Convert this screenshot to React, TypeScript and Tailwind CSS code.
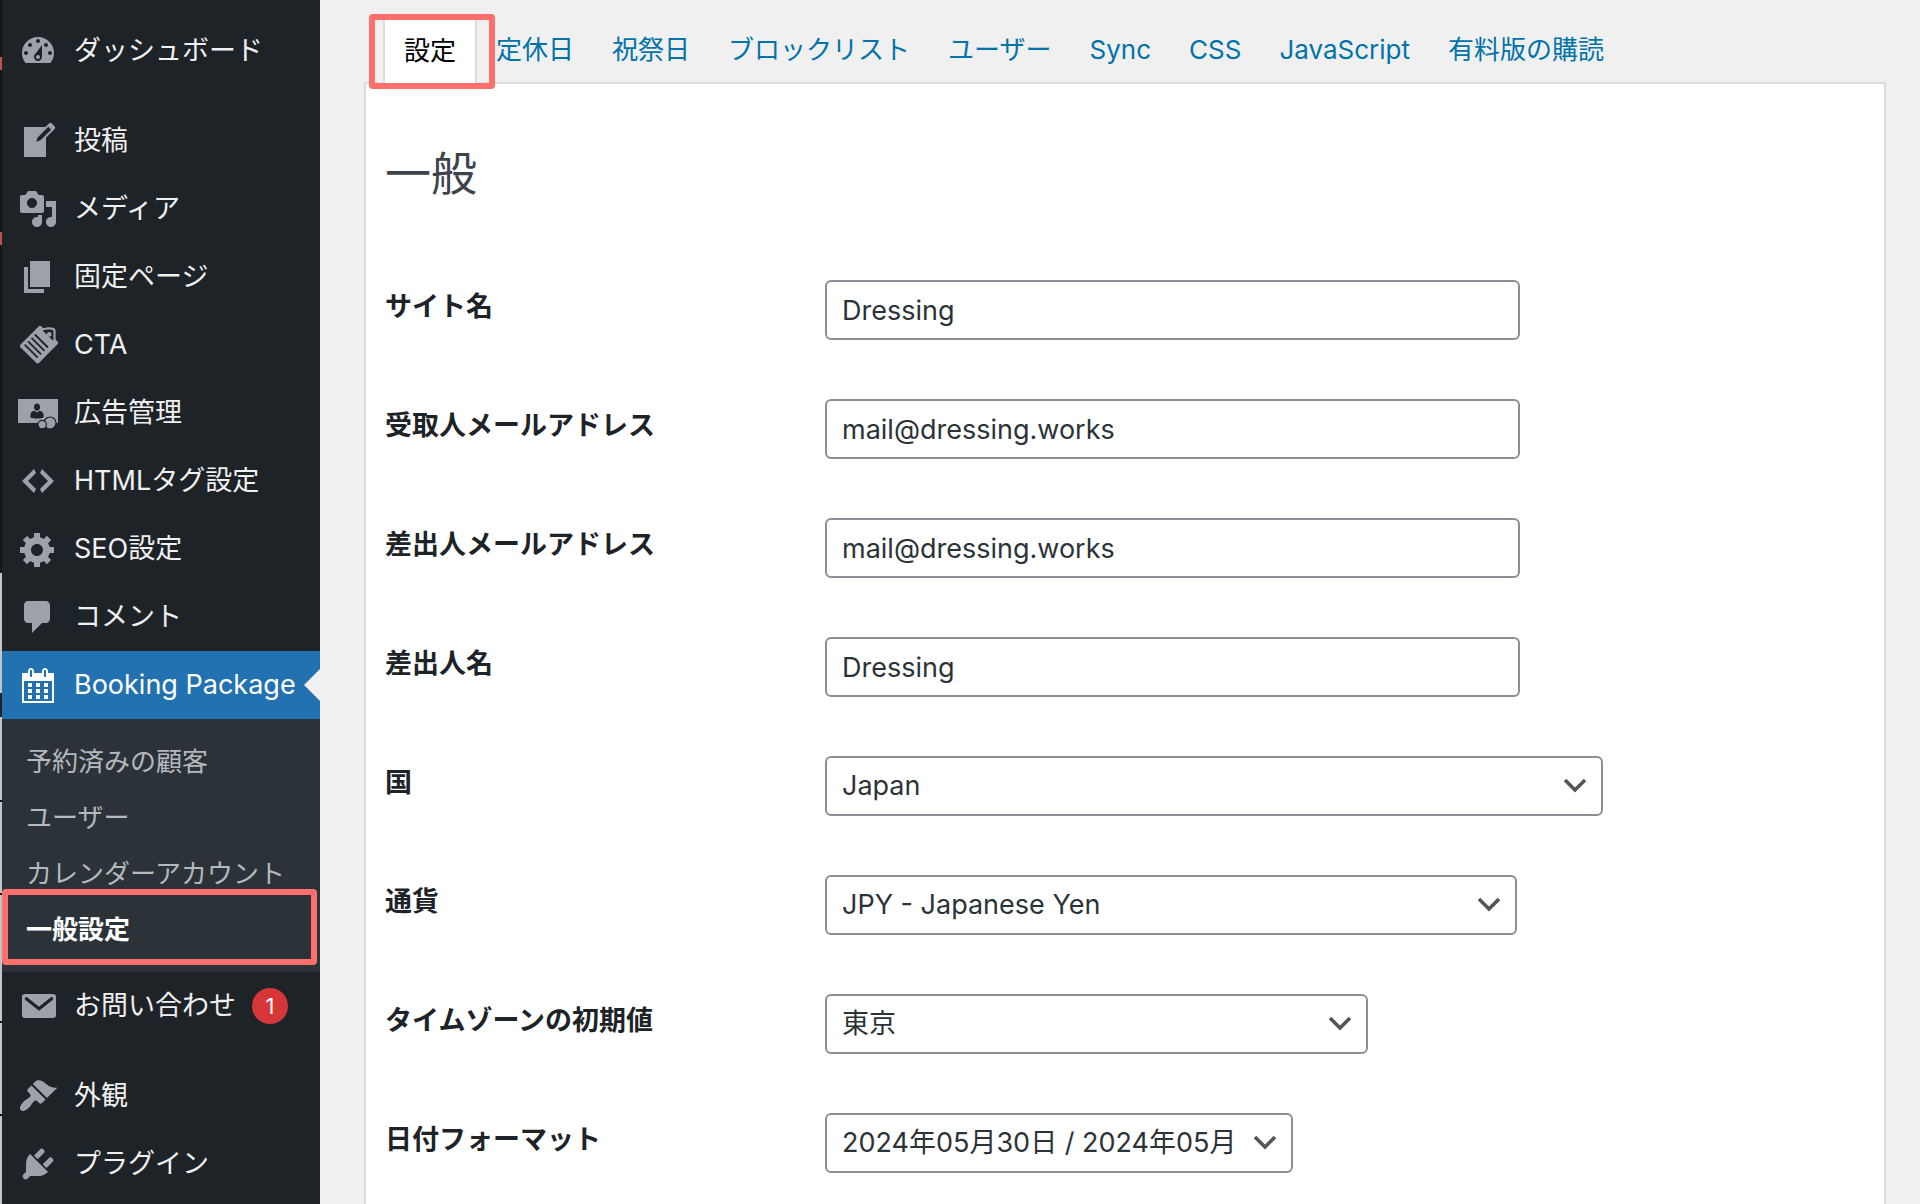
import type { ReactNode } from "react";

const JP = "font-[Inter,'Noto_Sans_CJK_JP',sans-serif]";

function Icon({ children }: { children: ReactNode }) {
  return (
    <svg viewBox="0 0 20 20" className="size-10 shrink-0" fill="currentColor" aria-hidden="true">
      {children}
    </svg>
  );
}

const icons: Record<string, ReactNode> = {
  dashboard: (
    <path d="M3.76 16h12.48c1.1-1.37 1.76-3.11 1.76-5 0-4.42-3.58-8-8-8s-8 3.58-8 8c0 1.89.66 3.63 1.76 5zM10 4c.55 0 1 .45 1 1s-.45 1-1 1-1-.45-1-1 .45-1 1-1zM6 6c.55 0 1 .45 1 1s-.45 1-1 1-1-.45-1-1 .45-1 1-1zm8 0c.55 0 1 .45 1 1s-.45 1-1 1-1-.45-1-1 .45-1 1-1zm-5.37 5.55L12 7v6c0 1.1-.9 2-2 2s-2-.9-2-2c0-.57.24-1.08.63-1.45zM4 10c.55 0 1 .45 1 1s-.45 1-1 1-1-.45-1-1 .45-1 1-1zm12 0c.55 0 1 .45 1 1s-.45 1-1 1-1-.45-1-1 .45-1 1-1zm-5 3c0-.55-.45-1-1-1s-1 .45-1 1 .45 1 1 1 1-.45 1-1z" />
  ),
  posts: (
    <path d="M16.89 1.2l1.41 1.41c.39.39.39 1.02 0 1.41L14 8.33V18H3V3h10.67l1.8-1.8c.4-.39 1.03-.4 1.42 0zm-5.66 8.48l5.37-5.36-1.42-1.42-5.36 5.37-.71 2.12z" />
  ),
  media: (
    <path d="M13 11V4c0-.55-.45-1-1-1h-1.67L9 1H5L3.67 3H2c-.55 0-1 .45-1 1v7c0 .55.45 1 1 1h10c.55 0 1-.45 1-1zM7 4.5c1.38 0 2.5 1.12 2.5 2.5S8.38 9.5 7 9.5 4.5 8.38 4.5 7 5.62 4.5 7 4.5zM14 6h5v10.5c0 1.38-1.12 2.5-2.5 2.5S14 17.88 14 16.5s1.12-2.5 2.5-2.5c.17 0 .34.02.5.05V9h-3V6zm-4 8.05V13h2v3.5c0 1.38-1.12 2.5-2.5 2.5S7 17.88 7 16.5 8.12 14 9.5 14c.17 0 .34.02.5.05z" />
  ),
  pages: <path d="M6 15V2h10v13H6zm-1 1h8v2H3V5h2v11z" />,
  cta: (
    <>
      <path d="M10.3.7c.5-.5.9-.5 1.4 0l.9.9c1.6-.5 3.8-.6 5.3-.1.7.3.9.8.9 1.5v4.300l.9.9c.5.5.5.9 0 1.400L10.600 18.900c-.5.5-1 .5-1.500 0L1.300 11.200c-.5-.5-.5-1 0-1.500z" />
      <path d="M12.300 2.700l5.100 5.100.3-.3V3.200c0-.4-.2-.6-.6-.7-1.300-.3-3.300-.3-4.800.2z" className="fill-[#1d2327]" />
      <circle cx="15.600" cy="4.700" r="1.200" />
      <path
        d="M3.800 10.300l6 6M5.500 8.600l6 6M7.200 6.900l6 6M8.900 5.200l6 6"
        transform="translate(-.2 -.2)"
        fill="none"
        strokeWidth=".9"
        strokeLinecap="round"
        className="stroke-[#1d2327]"
      />
    </>
  ),
  ads: (
    <>
      <path d="M0 3h20v12H0z" />
      <path
        className="fill-[#1d2327]"
        d="M9.500 5.300c.9 0 1.500.7 1.500 1.700S10.400 8.900 9.500 8.900 8 8 8 7s.6-1.700 1.500-1.700zM6.200 12.200V11c0-1.100.8-2 2-2.100l1.300.8 1.200-.8c1.200.1 2.100 1 2.100 2.100v1.200c-1.800.7-4.800.7-6.600 0z"
      />
      <path className="fill-[#1d2327]" d="M18.700 15H20v2h-2z" />
      <circle cx="16" cy="15" r="3" strokeWidth=".6" className="stroke-[#1d2327]" />
      <circle cx="12.100" cy="15.800" r="2.100" strokeWidth=".6" className="stroke-[#1d2327]" />
    </>
  ),
  code: <path d="M9 6l-4 4 4 4-1 2-6-6 6-6zm2 8l4-4-4-4 1-2 6 6-6 6z" />,
  gear: (
    <path d="M18 12h-2.180c-.17.7-.44 1.350-.81 1.930l1.540 1.540-2.100 2.100-1.540-1.540c-.58.36-1.230.63-1.910.79V19H8v-2.180c-.68-.16-1.330-.43-1.910-.79l-1.540 1.540-2.120-2.120 1.540-1.540c-.36-.58-.63-1.230-.79-1.910H1V9.030h2.170c.16-.7.44-1.350.8-1.940L2.430 5.550l2.100-2.100 1.540 1.540c.58-.37 1.240-.64 1.930-.81V2h3v2.180c.68.16 1.330.43 1.910.79l1.540-1.540 2.120 2.120-1.540 1.540c.36.59.64 1.240.8 1.940H18V12zm-8.500 1.500c1.660 0 3-1.340 3-3s-1.340-3-3-3-3 1.340-3 3 1.340 3 3 3z" />
  ),
  comments: <path d="M5 2h9c1.100 0 2 .9 2 2v7c0 1.100-.9 2-2 2h-2l-5 5v-5H5c-1.100 0-2-.9-2-2V4c0-1.100.9-2 2-2z" />,
  calendar: (
    <path d="M15 4h3v15H2V4h3V3c0-.41.15-.76.44-1.060.29-.29.65-.44 1.060-.44s.77.15 1.060.44c.29.3.44.65.44 1.060v1h4V3c0-.41.15-.76.44-1.060.29-.29.65-.44 1.060-.44s.77.15 1.060.44c.29.3.44.65.44 1.060v1zM6 3v2.500c0 .14.05.26.15.36.09.09.21.14.35.14s.26-.05.35-.14c.1-.1.15-.22.15-.36V3c0-.14-.05-.26-.15-.35-.09-.1-.21-.15-.35-.15s-.26.05-.35.15c-.1.09-.15.21-.15.35zm7 0v2.500c0 .14.05.26.14.36.1.09.22.14.36.14s.26-.05.36-.14c.09-.1.14-.22.14-.36V3c0-.14-.05-.26-.14-.35-.1-.1-.22-.15-.36-.15s-.26.05-.36.15c-.09.09-.14.21-.14.35zm4 15V8H3v10h14zM7 9v2H5V9h2zm2 0h2v2H9V9zm4 2V9h2v2h-2zm-6 1v2H5v-2h2zm2 0h2v2H9v-2zm4 2v-2h2v2h-2zm-6 1v2H5v-2h2zm4 2H9v-2h2v2zm4 0h-2v-2h2v2z" />
  ),
  mail: (
    <>
      <rect x="2" y="4" width="17" height="12" rx="1.500" />
      <path d="M4.200 6.400l6.300 5 6.300-5" fill="none" strokeWidth="1.600" strokeLinecap="round" className="stroke-[#1d2327]" />
    </>
  ),
  appearance: (
    <path d="M14.480 11.060L7.410 3.990l1.500-1.500c.5-.56 2.300-.47 3.510.32 1.210.8 1.430 1.280 2.910 2.100 1.180.64 2.450 1.260 4.450.85zm-.71.71L6.700 4.700 4.930 6.470c-.39.39-.39 1.020 0 1.410l1.060 1.060c.39.39.39 1.030 0 1.420-.6.6-1.430 1.110-2.210 1.690-.35.26-.7.53-1.010.84C1.430 14.230.4 16.080 1.400 17.070c.99 1 2.840-.03 4.180-1.360.31-.31.58-.66.85-1.020.57-.78 1.080-1.610 1.690-2.210.39-.39 1.020-.39 1.410 0l1.060 1.060c.39.39 1.020.39 1.410 0z" />
  ),
  plugins: (
    <path d="M13.110 4.360L9.870 7.600 8 5.730l3.240-3.240c.35-.34 1.050-.2 1.560.32.52.51.66 1.210.31 1.550zm-8 1.770l.91-1.120 9.010 9.010-1.190.84c-.71.71-2.630 1.160-3.820 1.160H6.140L4.900 17.260c-.59.59-1.540.59-2.120 0-.59-.58-.59-1.530 0-2.120l1.240-1.240v-3.880c0-1.130.4-3.190 1.090-3.890zm7.260 3.970l3.240-3.240c.34-.35 1.040-.21 1.550.31.52.51.66 1.210.31 1.550l-3.240 3.250z" />
  ),
};

function MenuItem({ icon, label, badge, active }: { icon: string; label: string; badge?: number; active?: boolean }) {
  return (
    <li>
      <a
        href="#"
        className={
          active
            ? "relative flex h-[68px] items-center gap-4 bg-[#2271b1] pl-4 text-white"
            : "flex h-[68px] items-center gap-4 pl-4 text-[#f0f0f1]"
        }
      >
        <span className={active ? "text-white" : "text-[#9ca2a7]"}>
          <Icon>{icons[icon]}</Icon>
        </span>
        <span className="whitespace-nowrap">{label}</span>
        {badge !== undefined && (
          <span className="flex size-9 items-center justify-center rounded-full bg-[#d63638] text-[22px] text-white">
            {badge}
          </span>
        )}
        {active && (
          <span className="absolute right-0 top-1/2 -translate-y-1/2 border-y-16 border-r-16 border-y-transparent border-r-[#f0f0f0]" />
        )}
      </a>
    </li>
  );
}

function SubItem({ label, current }: { label: string; current?: boolean }) {
  return (
    <li className="relative">
      <a
        href="#"
        className={
          current
            ? "flex h-14 items-center pl-6 font-bold text-white"
            : "flex h-14 items-center pl-6 text-[#b4b9be]"
        }
      >
        {label}
      </a>
      {current && (
        <span className="pointer-events-none absolute -top-3 right-[3px] -bottom-2 left-0 rounded border-6 border-[#ff6f6b]" />
      )}
    </li>
  );
}

const tabs = ["定休日", "祝祭日", "ブロックリスト", "ユーザー", "Sync", "CSS", "JavaScript", "有料版の購読"];

const box =
  "h-[60px] w-full rounded-[6px] border-2 border-[#8c8f94] bg-white pt-0.5 pl-[15px] text-[27px] text-[#2c3338] outline-none";

function Row({ id, label, width, children }: { id: string; label: string; width: string; children: ReactNode }) {
  return (
    <div className="flex h-[119px] items-center">
      <label htmlFor={id} className="w-[440px] shrink-0 pb-1 text-[27px] font-bold text-[#1d2327]">
        {label}
      </label>
      <div className={width}>{children}</div>
    </div>
  );
}

function TextRow({ id, label, value }: { id: string; label: string; value: string }) {
  return (
    <Row id={id} label={label} width="w-[695px]">
      <input id={id} type="text" defaultValue={value} className={box} />
    </Row>
  );
}

function SelectRow({ id, label, value, width }: { id: string; label: string; value: string; width: string }) {
  return (
    <Row id={id} label={label} width={width}>
      <div className="relative">
        <select id={id} className={`${box} appearance-none pr-12`}>
          <option>{value}</option>
        </select>
        <svg viewBox="0 0 20 20" className="pointer-events-none absolute top-2.5 right-2 size-10" aria-hidden="true" fill="none">
          <path d="M5 7l5 5 5-5" strokeWidth="1.800" className="stroke-[#555]" />
        </svg>
      </div>
    </Row>
  );
}

export default function App() {
  return (
    <div className={`flex min-h-screen bg-[#f0f0f0] ${JP}`}>
      <div className="w-0.5 shrink-0 bg-[linear-gradient(#15181b_0_57px,#c0504d_57px_70px,#15181b_70px_232px,#c0504d_232px_245px,#15181b_245px_573px,#c3c4c5_573px_693px,#222_693px_717px,#c3c4c5_717px_800px,#111_800px_802px,#c3c4c5_802px_893px,#111_893px_895px,#c3c4c5_895px_1021px,#111_1021px_1023px,#c3c4c5_1023px_1114px,#111_1114px_1116px,#c3c4c5_1116px)]" />
      <nav className="w-[318px] shrink-0 bg-[#1d2327] pt-[17px] text-[27px]">
        <ul>
          <MenuItem icon="dashboard" label="ダッシュボード" />
          <li className="h-[22px]" aria-hidden="true" />
          <MenuItem icon="posts" label="投稿" />
          <MenuItem icon="media" label="メディア" />
          <MenuItem icon="pages" label="固定ページ" />
          <MenuItem icon="cta" label="CTA" />
          <MenuItem icon="ads" label="広告管理" />
          <MenuItem icon="code" label="HTMLタグ設定" />
          <MenuItem icon="gear" label="SEO設定" />
          <MenuItem icon="comments" label="コメント" />
          <MenuItem icon="calendar" label="Booking Package" active />
          <li>
            <ul className="bg-[#2c3338] pt-3.5 pb-[15px] text-[26px]">
              <SubItem label="予約済みの顧客" />
              <SubItem label="ユーザー" />
              <SubItem label="カレンダーアカウント" />
              <SubItem label="一般設定" current />
            </ul>
          </li>
          <MenuItem icon="mail" label="お問い合わせ" badge={1} />
          <li className="h-[22px]" aria-hidden="true" />
          <MenuItem icon="appearance" label="外観" />
          <MenuItem icon="plugins" label="プラグイン" />
        </ul>
      </nav>
      <main className="flex min-w-0 flex-1 flex-col pr-[34px] pl-11">
        <div role="tablist" className="z-10 -mb-0.5 flex pt-4 pl-[19px] text-[26px]">
          <div className="relative">
            <button
              role="tab"
              aria-selected="true"
              className="h-[68px] border-x-2 border-[#dcdcde] bg-white px-[19px] text-black"
            >
              設定
            </button>
            <span className="pointer-events-none absolute -top-0.5 -right-[18px] -bottom-[5px] -left-[14px] rounded border-6 border-[#ff6f6b]" />
          </div>
          {tabs.map((t) => (
            <button key={t} role="tab" aria-selected="false" className="h-[66px] px-[19px] whitespace-nowrap text-[#0073aa]">
              {t}
            </button>
          ))}
        </div>
        <section className="flex-1 border-2 border-b-0 border-[#dcdcde] bg-white px-[19px] pt-14">
          <h1 className="mb-11 text-[46px] leading-[66px] text-[#3c434a]">一般</h1>
          <form>
            <TextRow id="site-name" label="サイト名" value="Dressing" />
            <TextRow id="email-to" label="受取人メールアドレス" value="mail@dressing.works" />
            <TextRow id="email-from" label="差出人メールアドレス" value="mail@dressing.works" />
            <TextRow id="email-title" label="差出人名" value="Dressing" />
            <SelectRow id="country" label="国" value="Japan" width="w-[778px]" />
            <SelectRow id="currency" label="通貨" value="JPY - Japanese Yen" width="w-[692px]" />
            <SelectRow id="timezone" label="タイムゾーンの初期値" value="東京" width="w-[543px]" />
            <SelectRow id="date-format" label="日付フォーマット" value="2024年05月30日 / 2024年05月" width="w-[468px]" />
          </form>
        </section>
      </main>
    </div>
  );
}
